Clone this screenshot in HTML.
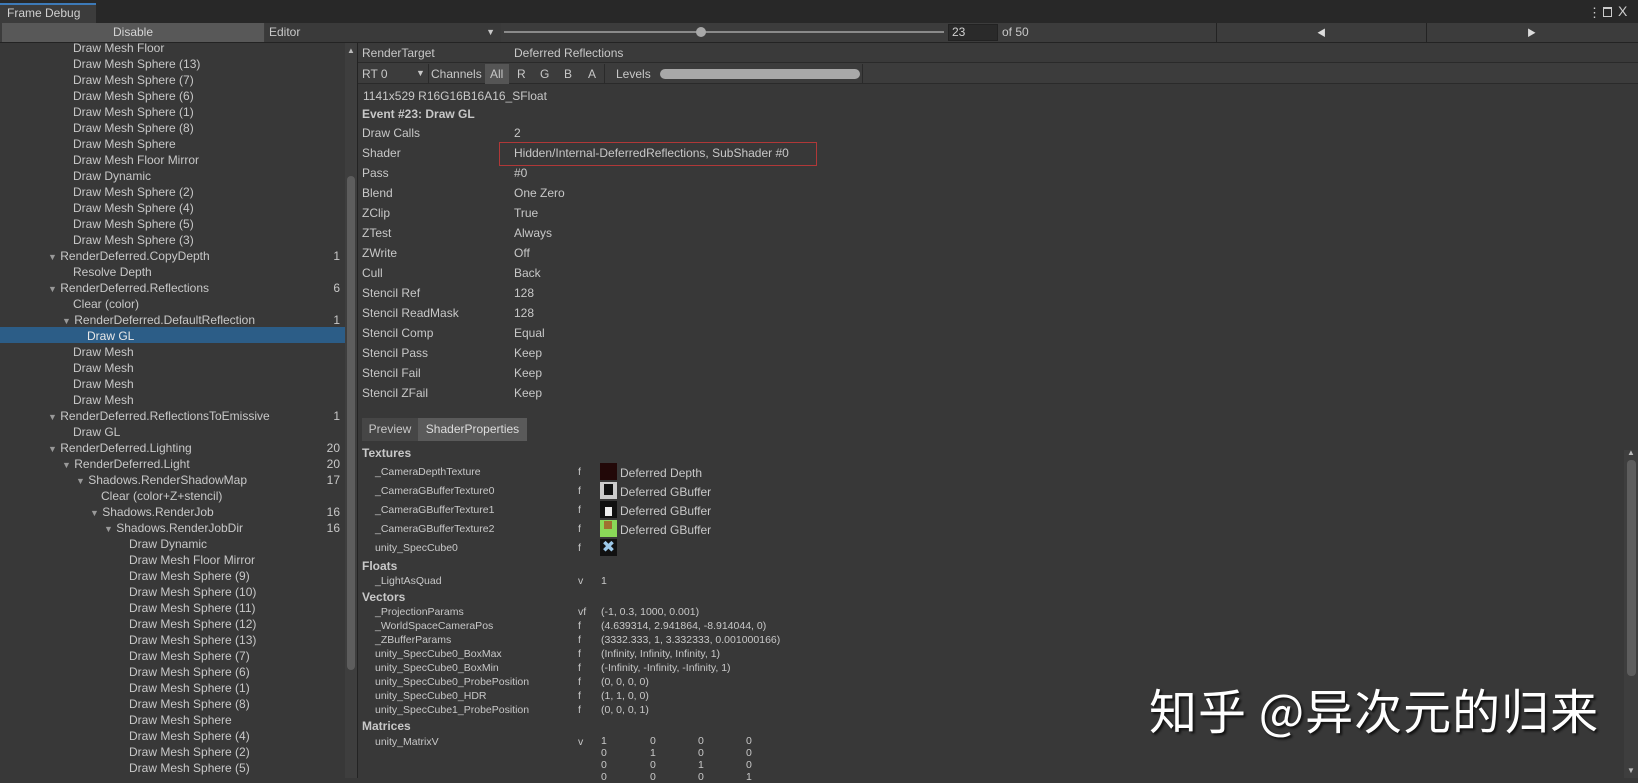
<!DOCTYPE html>
<html><head><meta charset="utf-8"><style>
*{margin:0;padding:0;box-sizing:border-box}
body{width:1638px;height:778px;overflow:hidden;background:#383838;font-family:"Liberation Sans","Noto Sans CJK SC",sans-serif;color:#c8c8c8;font-size:12px;position:relative}
.a{position:absolute;white-space:nowrap}
.tree div{position:absolute;height:16px;line-height:16px;white-space:nowrap;font-size:12px}
.tree .n{position:absolute;right:0;left:auto}
.tri{font-size:9px;color:#999}
.d{position:absolute;line-height:20px;font-size:12px}
.sp{position:absolute;font-size:10.5px;line-height:14px;white-space:nowrap}
.h{position:absolute;font-size:12px;font-weight:bold;color:#c8c8c8}
</style></head><body>
<div class="a" style="left:0;top:0;width:1638px;height:23px;background:#282828"></div>
<div class="a" style="left:0;top:3px;width:96px;height:20px;background:#3c3c3c;border-top:2px solid #3d7ab8;line-height:17px;padding-left:7px;font-size:12px;color:#d0d0d0">Frame Debug</div>
<div class="a" style="left:1588px;top:5px;font-size:13px;color:#ccc">⋮</div>
<div class="a" style="left:1603px;top:7px;width:9px;height:10px;border:1px solid #ccc;border-top-width:2px"></div>
<div class="a" style="left:1618px;top:3px;font-size:14px;color:#ccc">X</div>
<div class="a" style="left:0;top:23px;width:1638px;height:20px;background:#3c3c3c;border-bottom:1px solid #232323"></div>
<div class="a" style="left:2px;top:23px;width:262px;height:19px;background:#585858;text-align:center;line-height:19px;color:#d4d4d4">Disable</div>
<div class="a" style="left:265px;top:23px;width:236px;height:19px;background:#3a3a3a;line-height:19px;padding-left:4px">Editor<span style="position:absolute;right:6px;font-size:9px">▼</span></div>
<div class="a" style="left:504px;top:31px;width:440px;height:2px;background:#8a8a8a"></div>
<div class="a" style="left:696px;top:27px;width:10px;height:10px;border-radius:50%;background:#a8a8a8"></div>
<div class="a" style="left:948px;top:24px;width:50px;height:17px;background:#2a2a2a;border:1px solid #222;line-height:15px;padding-left:3px;color:#d0d0d0">23</div>
<div class="a" style="left:1002px;top:24px;line-height:17px">of 50</div>
<div class="a" style="left:1216px;top:23px;width:1px;height:20px;background:#232323"></div>
<div class="a" style="left:1426px;top:23px;width:1px;height:20px;background:#232323"></div>
<div class="a" style="left:1317px;top:26px;font-size:9px;color:#ddd">◀</div>
<div class="a" style="left:1527px;top:26px;font-size:9px;color:#ddd">▶</div>
<div class="a" style="left:0;top:43px;width:345px;height:735px;background:#383838"></div>
<div class="a" style="left:0;top:327px;width:345px;height:16px;background:#2c5d87"></div>
<div class="tree a" style="left:0;top:40px;width:340px;height:740px">
<div style="top:0;left:73px">Draw Mesh Floor</div>
<div style="top:16px;left:73px">Draw Mesh Sphere (13)</div>
<div style="top:32px;left:73px">Draw Mesh Sphere (7)</div>
<div style="top:48px;left:73px">Draw Mesh Sphere (6)</div>
<div style="top:64px;left:73px">Draw Mesh Sphere (1)</div>
<div style="top:80px;left:73px">Draw Mesh Sphere (8)</div>
<div style="top:96px;left:73px">Draw Mesh Sphere</div>
<div style="top:112px;left:73px">Draw Mesh Floor Mirror</div>
<div style="top:128px;left:73px">Draw Dynamic</div>
<div style="top:144px;left:73px">Draw Mesh Sphere (2)</div>
<div style="top:160px;left:73px">Draw Mesh Sphere (4)</div>
<div style="top:176px;left:73px">Draw Mesh Sphere (5)</div>
<div style="top:192px;left:73px">Draw Mesh Sphere (3)</div>
<div style="top:208px;left:48px"><span class="tri">▼</span> RenderDeferred.CopyDepth</div><div class="n" style="top:208px">1</div>
<div style="top:224px;left:73px">Resolve Depth</div>
<div style="top:240px;left:48px"><span class="tri">▼</span> RenderDeferred.Reflections</div><div class="n" style="top:240px">6</div>
<div style="top:256px;left:73px">Clear (color)</div>
<div style="top:272px;left:62px"><span class="tri">▼</span> RenderDeferred.DefaultReflection</div><div class="n" style="top:272px">1</div>
<div style="top:288px;left:87px;color:#e8e8e8">Draw GL</div>
<div style="top:304px;left:73px">Draw Mesh</div>
<div style="top:320px;left:73px">Draw Mesh</div>
<div style="top:336px;left:73px">Draw Mesh</div>
<div style="top:352px;left:73px">Draw Mesh</div>
<div style="top:368px;left:48px"><span class="tri">▼</span> RenderDeferred.ReflectionsToEmissive</div><div class="n" style="top:368px">1</div>
<div style="top:384px;left:73px">Draw GL</div>
<div style="top:400px;left:48px"><span class="tri">▼</span> RenderDeferred.Lighting</div><div class="n" style="top:400px">20</div>
<div style="top:416px;left:62px"><span class="tri">▼</span> RenderDeferred.Light</div><div class="n" style="top:416px">20</div>
<div style="top:432px;left:76px"><span class="tri">▼</span> Shadows.RenderShadowMap</div><div class="n" style="top:432px">17</div>
<div style="top:448px;left:101px">Clear (color+Z+stencil)</div>
<div style="top:464px;left:90px"><span class="tri">▼</span> Shadows.RenderJob</div><div class="n" style="top:464px">16</div>
<div style="top:480px;left:104px"><span class="tri">▼</span> Shadows.RenderJobDir</div><div class="n" style="top:480px">16</div>
<div style="top:496px;left:129px">Draw Dynamic</div>
<div style="top:512px;left:129px">Draw Mesh Floor Mirror</div>
<div style="top:528px;left:129px">Draw Mesh Sphere (9)</div>
<div style="top:544px;left:129px">Draw Mesh Sphere (10)</div>
<div style="top:560px;left:129px">Draw Mesh Sphere (11)</div>
<div style="top:576px;left:129px">Draw Mesh Sphere (12)</div>
<div style="top:592px;left:129px">Draw Mesh Sphere (13)</div>
<div style="top:608px;left:129px">Draw Mesh Sphere (7)</div>
<div style="top:624px;left:129px">Draw Mesh Sphere (6)</div>
<div style="top:640px;left:129px">Draw Mesh Sphere (1)</div>
<div style="top:656px;left:129px">Draw Mesh Sphere (8)</div>
<div style="top:672px;left:129px">Draw Mesh Sphere</div>
<div style="top:688px;left:129px">Draw Mesh Sphere (4)</div>
<div style="top:704px;left:129px">Draw Mesh Sphere (2)</div>
<div style="top:720px;left:129px">Draw Mesh Sphere (5)</div>
</div>
<div class="a" style="left:345px;top:43px;width:12px;height:735px;background:#3e3e3e"></div>
<div class="a" style="left:347px;top:46px;font-size:8px;color:#bbb">▲</div>
<div class="a" style="left:347px;top:176px;width:8px;height:494px;border-radius:4px;background:#5d5d5d"></div>
<div class="a" style="left:357px;top:43px;width:1px;height:735px;background:#232323"></div>
<div class="a" style="left:358px;top:43px;width:1280px;height:20px;background:#3a3a3a;border-bottom:1px solid #2a2a2a"></div>
<div class="a" style="left:362px;top:46px">RenderTarget</div>
<div class="a" style="left:514px;top:46px">Deferred Reflections</div>
<div class="a" style="left:358px;top:63px;width:1280px;height:21px;background:#3c3c3c;border-bottom:1px solid #2a2a2a"></div>
<div class="a" style="left:362px;top:67px">RT 0</div>
<div class="a" style="left:416px;top:68px;font-size:9px">▼</div>
<div class="a" style="left:428px;top:64px;width:1px;height:20px;background:#2a2a2a"></div>
<div class="a" style="left:431px;top:67px">Channels</div>
<div class="a" style="left:485px;top:64px;width:24px;height:20px;background:#555"></div>
<div class="a" style="left:490px;top:67px">All</div>
<div class="a" style="left:517px;top:67px">R</div>
<div class="a" style="left:540px;top:67px">G</div>
<div class="a" style="left:564px;top:67px">B</div>
<div class="a" style="left:588px;top:67px">A</div>
<div class="a" style="left:604px;top:64px;width:1px;height:20px;background:#2a2a2a"></div>
<div class="a" style="left:616px;top:67px">Levels</div>
<div class="a" style="left:660px;top:69px;width:200px;height:10px;border-radius:5px;background:#a8a8a8"></div>
<div class="a" style="left:862px;top:64px;width:1px;height:20px;background:#2a2a2a"></div>
<div class="a" style="left:363px;top:89px">1141x529 R16G16B16A16_SFloat</div>
<div class="a" style="left:362px;top:107px;font-weight:bold">Event #23: Draw GL</div>
<div class="d" style="left:362px;top:123px">Draw Calls<br>Shader<br>Pass<br>Blend<br>ZClip<br>ZTest<br>ZWrite<br>Cull<br>Stencil Ref<br>Stencil ReadMask<br>Stencil Comp<br>Stencil Pass<br>Stencil Fail<br>Stencil ZFail</div>
<div class="d" style="left:514px;top:123px">2<br>Hidden/Internal-DeferredReflections, SubShader #0<br>#0<br>One Zero<br>True<br>Always<br>Off<br>Back<br>128<br>128<br>Equal<br>Keep<br>Keep<br>Keep</div>
<div class="a" style="left:499px;top:142px;width:318px;height:24px;border:1px solid #b03838"></div>
<div class="a" style="left:362px;top:418px;width:56px;height:23px;background:#464646;line-height:23px;text-align:center">Preview</div>
<div class="a" style="left:418px;top:418px;width:109px;height:23px;background:#5a5a5a;line-height:23px;text-align:center;color:#ddd">ShaderProperties</div>
<div class="h" style="left:362px;top:446px">Textures</div>
<div class="sp" style="left:375px;top:463px;line-height:19px">_CameraDepthTexture<br>_CameraGBufferTexture0<br>_CameraGBufferTexture1<br>_CameraGBufferTexture2<br>unity_SpecCube0</div>
<div class="sp" style="left:578px;top:463px;line-height:19px">f<br>f<br>f<br>f<br>f</div>
<div class="a" style="left:600px;top:463px;width:17px;height:17px;background:#220808"></div>
<div class="a" style="left:600px;top:482px;width:17px;height:17px;background:#ccc"><div style="margin:2px 4px;width:9px;height:11px;background:#111"></div></div>
<div class="a" style="left:600px;top:501px;width:17px;height:17px;background:#111"><div style="margin:6px 5px;width:7px;height:9px;background:#eee"></div></div>
<div class="a" style="left:600px;top:520px;width:17px;height:17px;background:#8ad858"><div style="margin:1px 4px;width:8px;height:8px;background:#a07030"></div></div>
<div class="a" style="left:600px;top:539px;width:17px;height:17px;background:#111;color:#9cc8e8;font-size:16px;line-height:17px;text-align:center">✖</div>
<div class="a" style="left:620px;top:464px;font-size:12px;line-height:19px">Deferred Depth<br>Deferred GBuffer<br>Deferred GBuffer<br>Deferred GBuffer</div>
<div class="h" style="left:362px;top:559px">Floats</div>
<div class="sp" style="left:375px;top:574px">_LightAsQuad</div>
<div class="sp" style="left:578px;top:574px">v</div>
<div class="sp" style="left:601px;top:574px">1</div>
<div class="h" style="left:362px;top:590px">Vectors</div>
<div class="sp" style="left:375px;top:605px">_ProjectionParams<br>_WorldSpaceCameraPos<br>_ZBufferParams<br>unity_SpecCube0_BoxMax<br>unity_SpecCube0_BoxMin<br>unity_SpecCube0_ProbePosition<br>unity_SpecCube0_HDR<br>unity_SpecCube1_ProbePosition</div>
<div class="sp" style="left:578px;top:605px">vf<br>f<br>f<br>f<br>f<br>f<br>f<br>f</div>
<div class="sp" style="left:601px;top:605px">(-1, 0.3, 1000, 0.001)<br>(4.639314, 2.941864, -8.914044, 0)<br>(3332.333, 1, 3.332333, 0.001000166)<br>(Infinity, Infinity, Infinity, 1)<br>(-Infinity, -Infinity, -Infinity, 1)<br>(0, 0, 0, 0)<br>(1, 1, 0, 0)<br>(0, 0, 0, 1)</div>
<div class="h" style="left:362px;top:719px">Matrices</div>
<div class="sp" style="left:375px;top:735px">unity_MatrixV</div>
<div class="sp" style="left:578px;top:735px">v</div>
<div class="sp" style="left:601px;top:735px;line-height:12px">1<br>0<br>0<br>0</div>
<div class="sp" style="left:650px;top:735px;line-height:12px">0<br>1<br>0<br>0</div>
<div class="sp" style="left:698px;top:735px;line-height:12px">0<br>0<br>1<br>0</div>
<div class="sp" style="left:746px;top:735px;line-height:12px">0<br>0<br>0<br>1</div>
<div class="a" style="left:1624px;top:450px;width:14px;height:328px;background:#3e3e3e"></div>
<div class="a" style="left:1627px;top:448px;font-size:8px;color:#bbb">▲</div>
<div class="a" style="left:1627px;top:460px;width:9px;height:216px;border-radius:4px;background:#5d5d5d"></div>
<div class="a" style="left:1627px;top:766px;font-size:8px;color:#bbb">▼</div>
<div class="a" style="left:1149px;top:680px;font-family:'Noto Sans CJK SC',sans-serif;font-size:48px;line-height:56px;letter-spacing:1px;color:#fff;text-shadow:2px 2px 2px #111">知乎 @异次元的归来</div>
</body></html>
